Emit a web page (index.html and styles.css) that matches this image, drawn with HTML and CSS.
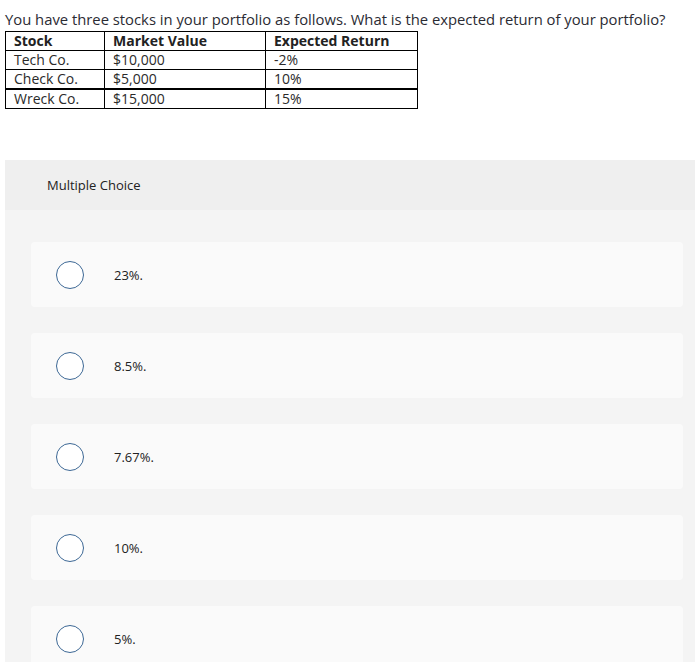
FILE: index.html
```html
<!DOCTYPE html>
<html lang="en">
<head>
<meta charset="utf-8">
<title>Portfolio question</title>
<link rel="stylesheet" href="styles.css">
</head>
<body>
<p class="question">You have three stocks in your portfolio as follows. What is the expected return of your portfolio?</p>
<table class="stocks">
  <thead>
    <tr><th class="c1">Stock</th><th class="c2">Market Value</th><th class="c3">Expected Return</th></tr>
  </thead>
  <tbody>
    <tr><td>Tech Co.</td><td>$10,000</td><td>-2%</td></tr>
    <tr><td>Check Co.</td><td>$5,000</td><td>10%</td></tr>
    <tr class="last"><td>Wreck Co.</td><td>$15,000</td><td>15%</td></tr>
  </tbody>
</table>
<section class="panel">
  <div class="panel-head">Multiple Choice</div>
  <div class="panel-body">
    <div class="choice"><span class="radio"></span><span class="label">23%.</span></div>
    <div class="choice"><span class="radio"></span><span class="label">8.5%.</span></div>
    <div class="choice"><span class="radio"></span><span class="label">7.67%.</span></div>
    <div class="choice"><span class="radio"></span><span class="label">10%.</span></div>
    <div class="choice"><span class="radio"></span><span class="label">5%.</span></div>
  </div>
</section>
</body>
</html>
```
FILE: styles.css
```css
html, body {
  margin: 0;
  padding: 0;
  background: #fff;
}
body {
  font-family: "Open Sans", "Liberation Sans", sans-serif;
  color: #2a2a2a;
  overflow: hidden;
}
.question {
  margin: 0;
  padding: 9px 0 0 5px;
  font-size: 14.8px;
  line-height: 20px;
  color: #2b2b33;
  white-space: nowrap;
}
.stocks {
  margin: 2px 0 0 5px;
  border-collapse: collapse;
  table-layout: fixed;
  width: 412px;
  font-size: 14px;
  color: #2a2a2a;
}
.stocks th, .stocks td {
  box-sizing: border-box;
  border: 1px solid #000;
  padding: 0 8px;
  height: 19px;
  line-height: 18px;
  text-align: left;
  font-weight: 400;
  white-space: nowrap;
}
.stocks th {
  font-weight: 700;
  color: #222;
}
.c1 { width: 99px; }
.c2 { width: 161px; }
.c3 { width: 152px; }
.stocks .last td {
  border-top: 2px solid #000;
}
.panel {
  margin: 51px 0 0 5px;
  background: #f4f4f4;
}
.panel-head {
  height: 50px;
  display: flex;
  align-items: center;
  padding-left: 42px;
  background: #efefef;
  font-size: 13px;
  color: #222;
}
.panel-body {
  display: flex;
  flex-direction: column;
  gap: 26px;
  padding: 32px 12px 0 26px;
}
.choice {
  height: 65px;
  display: flex;
  align-items: center;
  padding-left: 25px;
  background: #fafafa;
  border-radius: 4px;
}
.radio {
  box-sizing: border-box;
  width: 28px;
  height: 28px;
  border: 1.5px solid #3d6895;
  border-radius: 50%;
  background: #fff;
  flex: none;
}
.label {
  margin-left: 30px;
  font-size: 13px;
  color: #222;
}
```
